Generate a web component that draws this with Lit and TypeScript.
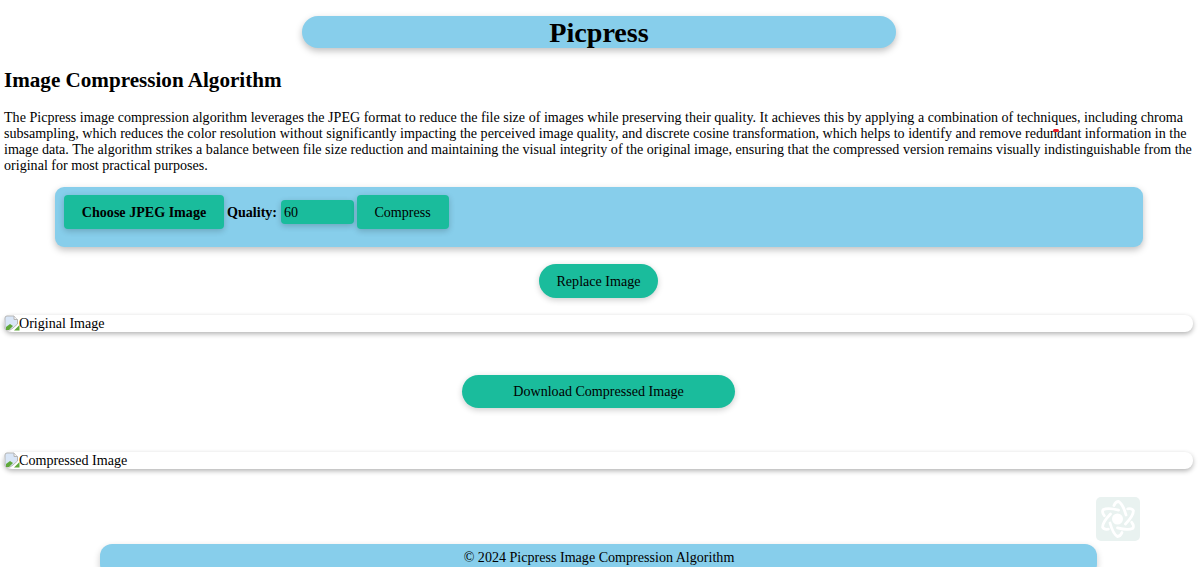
import { LitElement, html, svg, css } from "lit";
import { customElement } from "lit/decorators.js";

@customElement("app-root")
export class AppRoot extends LitElement {
  static styles = css`
    :host { display: block; position: relative; height: 567px; overflow: hidden; background: #fff; color: #000;
      font-family: "Liberation Serif", "Times New Roman", serif; font-size: 14.08px; line-height: 16px; }
    .page { padding: 16px 4px 0; display: flex; flex-direction: column; }
    header { align-self: center; width: 594px; height: 32px; margin-right: 2px; border-radius: 16px; background: #87ceeb;
      box-shadow: 0 3px 7px rgba(0,0,0,.25); text-align: center; }
    h1 { margin: 0; font-size: 28.16px; line-height: 33px; font-weight: 700; }
    h2 { margin: 20px 0 0; font-size: 21.12px; line-height: 24px; font-weight: 700; }
    p { margin: 18px 0 0; height: 63px; line-height: 15.84px; }
    form { align-self: center; box-sizing: border-box; width: 1088px; height: 60px; margin: 13.6px 0 0 -2px; padding: 8px 9px; border-radius: 9px;
      background: #87ceeb; box-shadow: 0 3px 7px rgba(0,0,0,.25); display: flex; align-items: flex-start; }
    .btn { box-sizing: border-box; height: 34px; display: flex; align-items: center; justify-content: center; background: #1abc9c;
      border-radius: 4px; box-shadow: 0 2px 6px rgba(0,0,0,.2); }
    .choose { width: 160px; font-weight: 700; }
    .label { font-weight: 700; margin: 0 4px 0 3px; line-height: 34px; }
    .input { box-sizing: border-box; width: 73px; height: 24px; margin: 5px 3px 0 0; padding: 0 3px; line-height: 24px; background: #1abc9c;
      border-radius: 4px; box-shadow: 0 2px 6px rgba(0,0,0,.2); }
    .compress { width: 92px; padding-right: 1px; }
    .pill { align-self: center; height: 34px; padding-left: 1px; border-radius: 17px; margin-right: 4px; }
    .replace { width: 119px; margin-top: 17px; }
    .frame { height: 17px; border-radius: 8px; margin-right: 3px; background: #fff; box-shadow: 0 2px 5px rgba(0,0,0,.3); display: flex; align-items: center; white-space: nowrap; }
    .frame svg { width: 16px; height: 16px; flex: none; margin-right: -1px; }
    .orig { margin-top: 17px; }
    .download { width: 273px; height: 33px; margin-top: 43px; }
    .comp { margin-top: 44px; }
    footer { align-self: center; box-sizing: border-box; width: 997px; height: 32px; margin: 75px 0 0 -4px; padding: 5px 0 0 2px; border-radius: 12px; background: #87ceeb;
      text-align: center; box-shadow: 0 3px 7px rgba(0,0,0,.2); }
    .mark { position: absolute; left: 1053px; top: 128.5px; width: 6px; height: 3px; border-radius: 2px; background: #e8202a; }
    .badge { position: absolute; left: 1096px; top: 497px; width: 44px; height: 44px; }
  `;

  private broken() {
    return html`<svg viewBox="0 0 16 16" aria-hidden="true">
      <path d="M1 3 Q1 1 3 1 H10 L13.5 4.5 V9 L9 13 L6 15 H3 Q1 15 1 13z" fill="#d9e6f7" stroke="#b5b5b5"/>
      <path d="M2 12 L6 9 L9 11 L5 15 H2z" fill="#5fa83a"/>
      <path d="M10 15.5 L15.5 10 V15.5z" fill="#5fa83a"/>
      <path d="M10 1 V4.5 H13.5" fill="#f2f2f2" stroke="#b5b5b5"/>
    </svg>`;
  }

  render() {
    const arm = "M30 18 C28.5 12.5 26 6.5 22.5 4.5 C20.5 4.5 19 6 18 8.5";
    return html`<div class="page">
      <header><h1>Picpress</h1></header>
      <h2>Image Compression Algorithm</h2>
      <p>The Picpress image compression algorithm leverages the JPEG format to reduce the file size of images while preserving their quality. It achieves this by applying a combination of techniques, including chroma subsampling, which reduces the color resolution without significantly impacting the perceived image quality, and discrete cosine transformation, which helps to identify and remove redundant information in the image data. The algorithm strikes a balance between file size reduction and maintaining the visual integrity of the original image, ensuring that the compressed version remains visually indistinguishable from the original for most practical purposes.</p>
      <form>
        <div class="btn choose">Choose JPEG Image</div>
        <span class="label">Quality:</span>
        <div class="input">60</div>
        <div class="btn compress">Compress</div>
      </form>
      <div class="btn pill replace">Replace Image</div>
      <div class="frame orig">${this.broken()}<span>Original Image</span></div>
      <div class="btn pill download">Download Compressed Image</div>
      <div class="frame comp">${this.broken()}<span>Compressed Image</span></div>
      <footer>© 2024 Picpress Image Compression Algorithm</footer>
    </div>
    <div class="mark"></div>
    <svg class="badge" viewBox="0 0 44 44" aria-hidden="true">
      <rect width="44" height="44" rx="5" fill="#e9f2f0"/>
      <circle cx="21.5" cy="22" r="5.5" fill="#fff"/>
      <g fill="none" stroke="#fff" stroke-width="2.8" stroke-linecap="round" stroke-linejoin="round">
        ${[0, 60, 120, 180, 240, 300].map((a) => svg`<path d=${arm} transform=${`rotate(${a} 22 22)`}></path>`)}
      </g>
    </svg>`;
  }
}
